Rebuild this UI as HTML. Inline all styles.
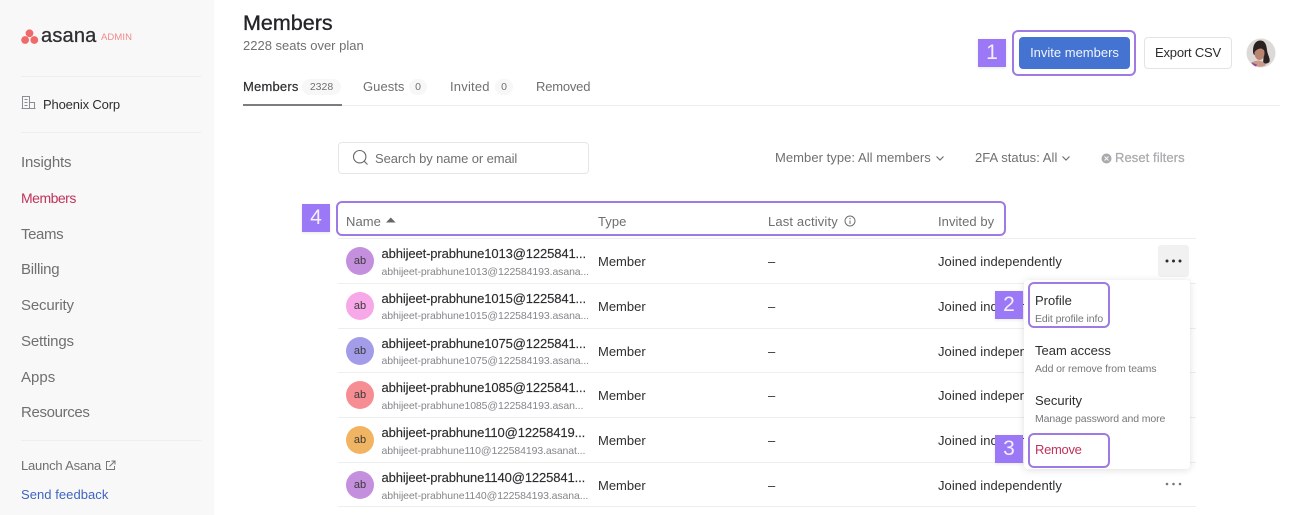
<!DOCTYPE html>
<html><head><meta charset="utf-8"><style>
html,body{margin:0;padding:0;background:#fff}
body{width:1300px;height:515px;overflow:hidden;position:relative;font-family:"Liberation Sans",sans-serif;color:#2c2d30}
.t{position:absolute;white-space:nowrap;line-height:20px;height:20px}
.box{position:absolute;box-sizing:border-box}
.nav{left:21px;font-size:15px;color:#6f7072}
.hl{position:absolute;height:1px;background:#eeeeee}
.pb{position:absolute;border:2px solid #9d7be3;border-radius:6px;box-sizing:border-box}
.num{position:absolute;width:28px;height:28px;background:#9b78f5;color:#f4efff;font-size:21px;line-height:28px;text-align:center;box-shadow:0 1px 3px rgba(0,0,0,.1)}
.av{position:absolute;left:346px;width:28px;height:28px;border-radius:50%;font-size:11px;line-height:28px;text-align:center;color:#3a3a3c}
.n1{left:381.500px;font-size:13px;color:#2b2c2e;letter-spacing:-.12px;-webkit-text-stroke:.15px #2b2c2e}
.n2{left:381.500px;font-size:10.500px;color:#85868a;letter-spacing:-.1px}
.c{font-size:13px;color:#2e2f31;letter-spacing:.05px}
.h{font-size:13px;color:#6d6e70;letter-spacing:.05px}
.m1{left:1035px;font-size:13px;color:#2d2e30;letter-spacing:0}
.m2{left:1035px;font-size:10.500px;color:#76777a;letter-spacing:-.12px}
.f{font-size:13px;color:#6f7072;letter-spacing:.05px}
.tab{font-size:13px;color:#6f7072;top:76.500px}
.pill{position:absolute;top:79px;height:16px;border-radius:8px;background:#f7f7f7;color:#6f7072;font-size:10.500px;line-height:16px;text-align:center}
</style></head><body>
<div class="box" style="left:0;top:0;width:214px;height:515px;background:#f9f8f8"></div>
<svg class="box" style="left:21px;top:28px" width="18" height="18"><circle cx="8.500" cy="5.300" r="3.900" fill="#f06a6a"/><circle cx="4.100" cy="12" r="3.900" fill="#f06a6a"/><circle cx="13.300" cy="12" r="3.900" fill="#f06a6a"/></svg>
<div class="t" style="left:41px;top:24px;font-size:20px;color:#2f2f33;letter-spacing:.2px;line-height:24px;height:24px;-webkit-text-stroke:.3px #2f2f33">asana</div>
<div class="t" style="left:101px;top:28px;font-size:9.500px;color:#f08a8a;letter-spacing:.1px">ADMIN</div>
<div class="hl" style="left:21px;top:76px;width:180px"></div>
<svg class="box" style="left:21px;top:95px" width="16" height="15" fill="none" stroke="#8c8d90" stroke-width="1"><path d="M1.500 13.500V1.500H8.500V13.500M8.500 7.500H13.500V13.500M.5 13.500H14.500M3.500 4.500H6.500M3.500 7.500H6.500M3.500 10.500H6.500"/></svg>
<div class="t" style="left:43px;top:95px;font-size:13px;color:#2d2e30;letter-spacing:-.15px">Phoenix Corp</div>
<div class="hl" style="left:21px;top:132px;width:180px"></div>
<div class="t nav" style="top:153px;letter-spacing:-.17px">Insights</div>
<div class="t nav" style="top:188px;color:#c0325a;font-size:14px;letter-spacing:-.5px">Members</div>
<div class="t nav" style="top:225px;letter-spacing:-.4px">Teams</div>
<div class="t nav" style="top:260px;letter-spacing:-.23px">Billing</div>
<div class="t nav" style="top:296px;letter-spacing:-.17px">Security</div>
<div class="t nav" style="top:332px;letter-spacing:-.17px">Settings</div>
<div class="t nav" style="top:368px;letter-spacing:0">Apps</div>
<div class="t nav" style="top:403px;letter-spacing:-.35px">Resources</div>
<div class="hl" style="left:21px;top:440px;width:180px"></div>
<div class="t" style="left:21px;top:456px;font-size:13px;color:#6f7072;letter-spacing:-.2px">Launch Asana</div>
<svg class="box" style="left:105px;top:460px" width="11" height="11" fill="none" stroke="#77787b" stroke-width="1"><path d="M5 1.500H1.500V9.500H9.500V6M4.500 6.500L9.500 1.500M6.500 1H10V4.500"/></svg>
<div class="t" style="left:21px;top:485px;font-size:13px;color:#3f64c0;letter-spacing:.05px">Send feedback</div>

<div class="t" style="left:243px;top:12px;font-size:21.500px;color:#242528;line-height:22px;height:22px;-webkit-text-stroke:.35px #242528">Members</div>
<div class="t" style="left:243px;top:36px;font-size:13px;color:#6f7072;letter-spacing:0">2228 seats over plan</div>
<div class="hl" style="left:243px;top:105px;width:1037px"></div>
<div class="t tab" style="left:243px;color:#2d2e30;letter-spacing:.2px;-webkit-text-stroke:.2px #2d2e30">Members</div>
<div class="pill" style="left:302px;width:39px">2328</div>
<div class="box" style="left:243px;top:104px;width:99px;height:2px;background:#7c7d80"></div>
<div class="t tab" style="left:363px;letter-spacing:.05px">Guests</div>
<div class="pill" style="left:409px;width:18px">0</div>
<div class="t tab" style="left:450px;letter-spacing:.2px">Invited</div>
<div class="pill" style="left:495px;width:18px">0</div>
<div class="t tab" style="left:536px;letter-spacing:-.2px">Removed</div>

<div class="box" style="left:1019px;top:37px;width:111px;height:32px;background:#4573d2;border-radius:4px;color:#f2f5fc;font-size:13px;line-height:32px;text-align:center;letter-spacing:0">Invite members</div>
<div class="pb" style="left:1012px;top:30px;width:124px;height:46px"></div>
<div class="num" style="left:978px;top:39px">1</div>
<div class="box" style="left:1144px;top:37px;width:88px;height:32px;border:1px solid #e4e4e5;border-radius:4px;color:#2a2b2d;font-size:13px;line-height:30px;text-align:center;letter-spacing:-.2px">Export CSV</div>
<svg class="box" style="left:1246px;top:38px" width="30" height="30"><circle cx="15" cy="15" r="14.500" fill="#dcd9d8"/><path d="M7 13C7 6 10 2.500 14.500 2.500C19 2.500 20.500 7 21 12C21.500 17 24.500 20 23.500 24C21 26 19 26 17 25C18 18 18 12 15 9C12.500 11 10 13 9 17C7.500 17 7 15 7 13Z" fill="#2a2120"/><ellipse cx="13.500" cy="15" rx="5" ry="7" fill="#b98570"/><path d="M8 9C9 4 13 3 16 5C18 7 19 10 18.500 13C16 9 12 10 8.500 14Z" fill="#2a2120"/><path d="M5 25C9 22 16 21 20 27C15 30 9 29 5 25Z" fill="#c99a87"/><path d="M5.500 24.500L11 26.500L10 28.500C8 28 6.500 26.500 5.500 24.500Z" fill="#96489a"/></svg>

<div class="box" style="left:338px;top:142px;width:251px;height:32px;border:1px solid #e6e6e7;border-radius:4px"></div>
<svg class="box" style="left:352px;top:149px" width="18" height="18" fill="none" stroke="#66676a" stroke-width="1.100"><circle cx="7.700" cy="7.700" r="6.200"/><path d="M12 12L15.500 15.500"/></svg>
<div class="t f" style="left:375px;top:148.500px;letter-spacing:-.1px">Search by name or email</div>
<div class="t f" style="left:775px;top:148px">Member type: All members</div>
<svg class="box" style="left:935px;top:155px" width="10" height="7" fill="none" stroke="#6f7072" stroke-width="1.200"><path d="M1.500 1.500L5 5L8.500 1.500"/></svg>
<div class="t f" style="left:975px;top:148px">2FA status: All</div>
<svg class="box" style="left:1061px;top:155px" width="10" height="7" fill="none" stroke="#6f7072" stroke-width="1.200"><path d="M1.500 1.500L5 5L8.500 1.500"/></svg>
<svg class="box" style="left:1101px;top:153px" width="11" height="11"><circle cx="5.500" cy="5.500" r="5" fill="#a9aaac"/><path d="M3.500 3.500L7.500 7.500M7.500 3.500L3.500 7.500" stroke="#f2f2f2" stroke-width="1.200"/></svg>
<div class="t" style="left:1115px;top:148px;font-size:13px;color:#a9aaac;letter-spacing:.08px;-webkit-text-stroke:.25px #a9aaac">Reset filters</div>

<div class="num" style="left:302px;top:204px">4</div>
<div class="pb" style="left:336px;top:201px;width:670px;height:35px"></div>
<div class="t h" style="left:346px;top:211.500px">Name</div>
<svg class="box" style="left:386px;top:217px" width="10" height="6"><path d="M0 5.500L4.800 .5L9.600 5.500Z" fill="#66676a"/></svg>
<div class="t h" style="left:598px;top:211.500px">Type</div>
<div class="t h" style="left:768px;top:211.500px;letter-spacing:.15px">Last activity</div>
<svg class="box" style="left:844px;top:215px" width="12" height="12" fill="none" stroke="#6f7072"><circle cx="6" cy="6" r="5"/><path d="M6 5.500V9M6 3V4.200"/></svg>
<div class="t h" style="left:938px;top:211.500px">Invited by</div>
<div class="hl" style="left:338px;top:238px;width:858px"></div>

<div class="av" style="top:247px;background:#c48fdc">ab</div>
<div class="t n1" style="top:244px">abhijeet-prabhune1013@1225841...</div>
<div class="t n2" style="top:262px">abhijeet-prabhune1013@122584193.asana...</div>
<div class="t c" style="left:598px;top:251.500px;letter-spacing:0">Member</div><div class="t c" style="left:768px;top:251.500px">–</div><div class="t c" style="left:938px;top:251.500px">Joined independently</div>
<div class="hl" style="left:338px;top:283px;width:858px"></div>

<div class="av" style="top:292px;background:#f7a8e8">ab</div>
<div class="t n1" style="top:289px">abhijeet-prabhune1015@1225841...</div>
<div class="t n2" style="top:306px">abhijeet-prabhune1015@122584193.asana...</div>
<div class="t c" style="left:598px;top:296.500px;letter-spacing:0">Member</div><div class="t c" style="left:768px;top:296.500px">–</div><div class="t c" style="left:938px;top:296.500px">Joined independently</div>
<div class="hl" style="left:338px;top:328px;width:858px"></div>

<div class="av" style="top:337px;background:#a39ce8">ab</div>
<div class="t n1" style="top:334px">abhijeet-prabhune1075@1225841...</div>
<div class="t n2" style="top:351px">abhijeet-prabhune1075@122584193.asana...</div>
<div class="t c" style="left:598px;top:341.500px;letter-spacing:0">Member</div><div class="t c" style="left:768px;top:341.500px">–</div><div class="t c" style="left:938px;top:341.500px">Joined independently</div>
<div class="hl" style="left:338px;top:372px;width:858px"></div>

<div class="av" style="top:381px;background:#f58d92">ab</div>
<div class="t n1" style="top:378px">abhijeet-prabhune1085@1225841...</div>
<div class="t n2" style="top:396px">abhijeet-prabhune1085@122584193.asan...</div>
<div class="t c" style="left:598px;top:385.500px;letter-spacing:0">Member</div><div class="t c" style="left:768px;top:385.500px">–</div><div class="t c" style="left:938px;top:385.500px">Joined independently</div>
<div class="hl" style="left:338px;top:417px;width:858px"></div>

<div class="av" style="top:426px;background:#f0b463">ab</div>
<div class="t n1" style="top:423px">abhijeet-prabhune110@12258419...</div>
<div class="t n2" style="top:441px">abhijeet-prabhune110@122584193.asanat...</div>
<div class="t c" style="left:598px;top:430.500px;letter-spacing:0">Member</div><div class="t c" style="left:768px;top:430.500px">–</div><div class="t c" style="left:938px;top:430.500px">Joined independently</div>
<div class="hl" style="left:338px;top:462px;width:858px"></div>

<div class="av" style="top:471px;background:#c48fdc">ab</div>
<div class="t n1" style="top:468px">abhijeet-prabhune1140@1225841...</div>
<div class="t n2" style="top:486px">abhijeet-prabhune1140@122584193.asana...</div>
<div class="t c" style="left:598px;top:475.500px;letter-spacing:0">Member</div><div class="t c" style="left:768px;top:475.500px">–</div><div class="t c" style="left:938px;top:475.500px">Joined independently</div>
<div class="hl" style="left:338px;top:506px;width:858px"></div>

<div class="box" style="left:1158px;top:245px;width:31px;height:32px;background:#f1f1f1;border-radius:3px"></div>
<svg class="box" style="left:1165px;top:259px" width="17" height="4" fill="#2c2d30"><circle cx="2" cy="2" r="1.500"/><circle cx="8.500" cy="2" r="1.500"/><circle cx="15" cy="2" r="1.500"/></svg>
<svg class="box" style="left:1165px;top:482px" width="17" height="4" fill="#77787b"><circle cx="2" cy="2" r="1.300"/><circle cx="8.500" cy="2" r="1.300"/><circle cx="15" cy="2" r="1.300"/></svg>

<div class="box" style="left:1024px;top:280px;width:166px;height:189px;background:#fff;border-radius:4px;box-shadow:0 1px 8px rgba(0,0,0,.13)"></div>
<div class="t m1" style="top:290.500px">Profile</div>
<div class="t m2" style="top:308.500px;letter-spacing:-.08px">Edit profile info</div>
<div class="t m1" style="top:340.500px">Team access</div>
<div class="t m2" style="top:358.500px">Add or remove from teams</div>
<div class="t m1" style="top:390.500px">Security</div>
<div class="t m2" style="top:408.500px">Manage password and more</div>
<div class="t m1" style="top:439.500px;color:#c0325a;letter-spacing:-.3px">Remove</div>
<div class="pb" style="left:1028px;top:282px;width:82px;height:46px"></div>
<div class="pb" style="left:1028px;top:433px;width:82px;height:35px"></div>
<div class="num" style="left:995px;top:291px">2</div>
<div class="num" style="left:995px;top:435px">3</div>
</body></html>
